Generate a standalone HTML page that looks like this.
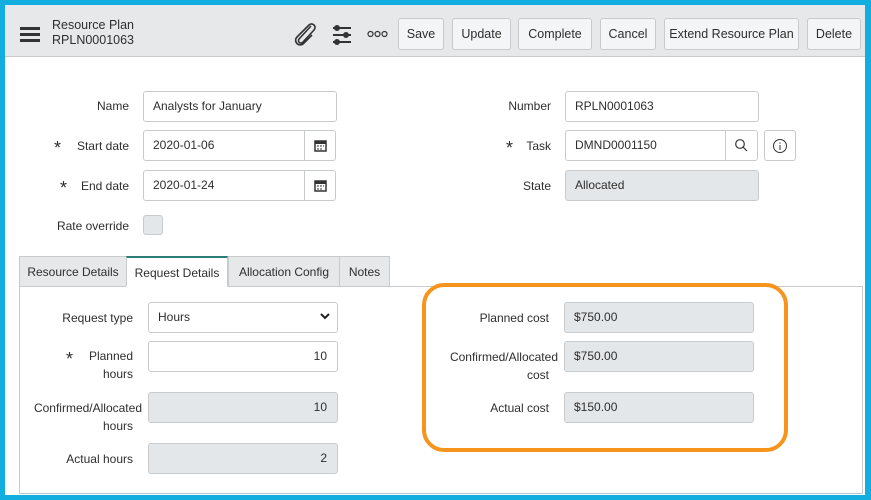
<!DOCTYPE html><html><head><style>
*{box-sizing:border-box;margin:0;padding:0}
body{width:871px;height:500px;background:#12aee0;position:relative;overflow:hidden;font-family:"Liberation Sans",sans-serif;font-size:12px;color:#2e2e2e}
.a{position:absolute}
#main{left:5px;top:5px;width:860px;height:490px;background:#fff}
#hdr{left:5px;top:5px;width:860px;height:52px;background:#e6e8ea;border-bottom:1px solid #c8cbce}
.btn{position:absolute;top:18px;height:32px;border:1px solid #c8cbce;border-radius:3px;background:#f4f5f6;line-height:30px;text-align:center;font-size:12.5px}
.lbl{position:absolute;text-align:right;font-size:12px;line-height:18px}
.in{position:absolute;height:31px;border:1px solid #c8cbce;border-radius:3px;background:#fff;padding-left:9px;line-height:29px;font-size:12px}
.ro{background:#e4e7ea}
.r{text-align:right;padding-right:10px}
.star{font-size:18px;position:absolute;line-height:18px;font-weight:300}
.tab{position:absolute;top:256px;height:31px;border:1px solid #c8cbce;background:#e6e8ea;line-height:30px;text-align:center;font-size:12px}
</style></head><body>
<div class="a" id="main"></div>
<div class="a" id="hdr"></div>
<div class="a" style="left:20px;top:27px;width:20px;height:3px;background:#333;box-shadow:0 6px 0 #333,0 12px 0 #333"></div>
<div class="a" style="left:52px;top:18px;font-size:12.5px;line-height:15px">Resource Plan<br>RPLN0001063</div>
<svg class="a" style="left:293px;top:23px" width="24" height="24" viewBox="0 0 24 24"><path d="M18 3 L6 16 a2.5 2.5 0 0 0 3.5 3.5 L21 7 a3.5 3.5 0 0 0-5-5 L4 14 a4.5 4.5 0 0 0 6.5 6.5 L19 12" fill="none" stroke="#333" stroke-width="1.6"/></svg>
<svg class="a" style="left:331px;top:24px" width="22" height="22" viewBox="0 0 22 22" stroke="#333" stroke-width="2"><path d="M2 4h18M2 11h18M2 18h18"/><circle cx="6" cy="4" r="2" fill="#333"/><circle cx="15" cy="11" r="2" fill="#333"/><circle cx="6" cy="18" r="2" fill="#333"/></svg>
<svg class="a" style="left:367px;top:30px" width="22" height="8" fill="none" stroke="#333" stroke-width="1.2"><circle cx="3.5" cy="4" r="2.5"/><circle cx="10.5" cy="4" r="2.5"/><circle cx="17.5" cy="4" r="2.5"/></svg>
<div class="btn" style="left:398px;width:46px">Save</div>
<div class="btn" style="left:452px;width:59px">Update</div>
<div class="btn" style="left:518px;width:74px">Complete</div>
<div class="btn" style="left:600px;width:56px">Cancel</div>
<div class="btn" style="left:664px;width:135px">Extend Resource Plan</div>
<div class="btn" style="left:807px;width:54px">Delete</div>

<div class="lbl" style="left:40px;width:89px;top:97px">Name</div>
<div class="in" style="left:143px;top:91px;width:194px">Analysts for January</div>
<div class="star" style="left:54px;top:139px">*</div><div class="lbl" style="left:70px;width:59px;top:137px">Start date</div>
<div class="in" style="left:143px;top:130px;width:193px">2020-01-06</div>
<div class="a" style="left:304px;top:131px;width:1px;height:29px;background:#c8cbce"></div>
<div class="star" style="left:60px;top:179px">*</div><div class="lbl" style="left:70px;width:59px;top:177px">End date</div>
<div class="in" style="left:143px;top:170px;width:193px">2020-01-24</div>
<div class="a" style="left:304px;top:171px;width:1px;height:29px;background:#c8cbce"></div>
<svg class="a" style="left:314px;top:139px" width="13" height="13"><rect x="1" y="2" width="11" height="10" fill="none" stroke="#333" stroke-width="1.5"/><rect x="1" y="2" width="11" height="3" fill="#333"/><path d="M3 7h2M6 7h2M9 7h1M3 10h2M6 10h2" stroke="#333"/></svg>
<svg class="a" style="left:314px;top:179px" width="13" height="13"><rect x="1" y="2" width="11" height="10" fill="none" stroke="#333" stroke-width="1.5"/><rect x="1" y="2" width="11" height="3" fill="#333"/><path d="M3 7h2M6 7h2M9 7h1M3 10h2M6 10h2" stroke="#333"/></svg>
<div class="lbl" style="left:40px;width:89px;top:217px">Rate override</div>
<div class="a" style="left:143px;top:215px;width:20px;height:20px;border:1px solid #c8cbce;border-radius:3px;background:#e4e7ea"></div>

<div class="lbl" style="left:460px;width:91px;top:97px">Number</div>
<div class="in" style="left:565px;top:91px;width:194px">RPLN0001063</div>
<div class="star" style="left:506px;top:139px">*</div><div class="lbl" style="left:520px;width:31px;top:137px">Task</div>
<div class="in" style="left:565px;top:130px;width:193px">DMND0001150</div>
<div class="a" style="left:725px;top:131px;width:1px;height:29px;background:#c8cbce"></div>
<svg class="a" style="left:734px;top:138px" width="14" height="14" fill="none" stroke="#333" stroke-width="1.2"><circle cx="6" cy="6" r="4.3"/><path d="M9 9l4 4"/></svg>
<div class="in" style="left:764px;top:130px;width:32px;padding:0"></div>
<svg class="a" style="left:772px;top:138px" width="16" height="16" fill="none" stroke="#333" stroke-width="1"><circle cx="8" cy="8" r="6.5"/><path d="M8 7v5M8 4.5v1.3"/></svg>
<div class="lbl" style="left:460px;width:91px;top:177px">State</div>
<div class="in ro" style="left:565px;top:170px;width:194px">Allocated</div>

<div class="tab" style="left:19px;width:108px">Resource Details</div>
<div class="tab" style="left:126px;width:102px;background:#fff;border-top:2px solid #2b7d74;border-bottom-color:#fff;z-index:2">Request Details</div>
<div class="tab" style="left:228px;width:112px">Allocation Config</div>
<div class="tab" style="left:339px;width:51px">Notes</div>
<div class="a" style="left:19px;top:286px;width:844px;height:208px;border:1px solid #c8cbce;border-bottom-color:#b9c9d3"></div>

<div class="lbl" style="left:30px;width:103px;top:309px">Request type</div>
<div class="in" style="left:148px;top:302px;width:190px">Hours</div>
<svg class="a" style="left:320px;top:313px" width="10" height="8"><path d="M1 1l4 4 4-4" fill="none" stroke="#222" stroke-width="2"/></svg>
<div class="star" style="left:66px;top:350px">*</div><div class="lbl" style="left:80px;width:53px;top:347px">Planned<br>hours</div>
<div class="in r" style="left:148px;top:341px;width:190px">10</div>
<div class="lbl" style="left:25px;width:117px;top:399px">Confirmed/Allocated<br><span style="padding-right:9px">hours</span></div>
<div class="in ro r" style="left:148px;top:392px;width:190px">10</div>
<div class="lbl" style="left:30px;width:103px;top:450px">Actual hours</div>
<div class="in ro r" style="left:148px;top:443px;width:190px">2</div>

<div class="lbl" style="left:440px;width:109px;top:309px">Planned cost</div>
<div class="in ro" style="left:564px;top:302px;width:190px">$750.00</div>
<div class="lbl" style="left:440px;width:118px;top:348px">Confirmed/Allocated<br><span style="padding-right:9px">cost</span></div>
<div class="in ro" style="left:564px;top:341px;width:190px">$750.00</div>
<div class="lbl" style="left:440px;width:109px;top:399px">Actual cost</div>
<div class="in ro" style="left:564px;top:392px;width:190px">$150.00</div>
<div class="a" style="left:422px;top:283px;width:366px;height:169px;border:4px solid #f7941d;border-radius:22px"></div>
</body></html>
